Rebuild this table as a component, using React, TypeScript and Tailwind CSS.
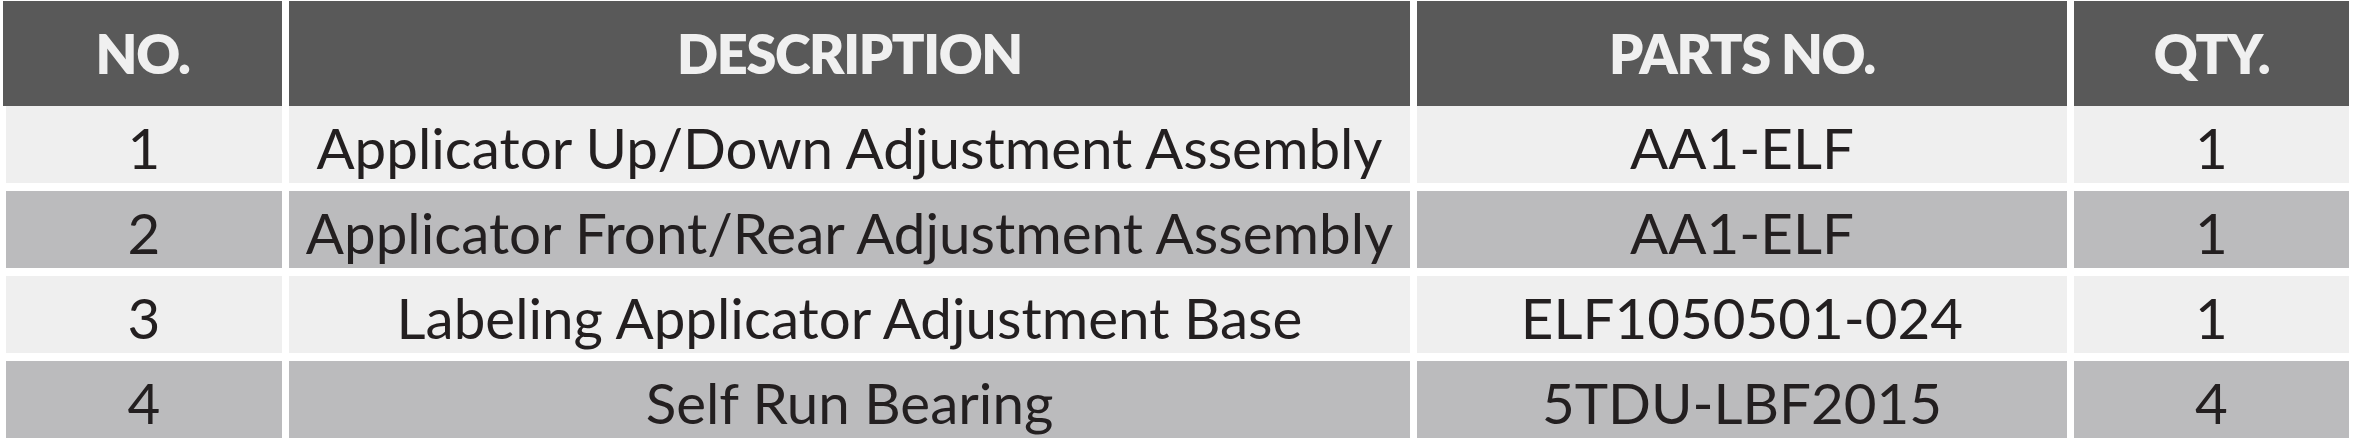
import React from "react";

const rows = [
  { no: "1", desc: "Applicator Up/Down Adjustment Assembly", part: "AA1-ELF", qty: "1" },
  { no: "2", desc: "Applicator Front/Rear Adjustment Assembly", part: "AA1-ELF", qty: "1" },
  { no: "3", desc: "Labeling Applicator Adjustment Base", part: "ELF1050501-024", qty: "1" },
  { no: "4", desc: "Self Run Bearing", part: "5TDU-LBF2015", qty: "4" },
];

export default function App() {
  return (
    <div className="w-[2357px] h-[444px] bg-white pl-[3px] pt-[1px] font-['Lato',sans-serif]">
      {/* header */}
      <div className="grid grid-cols-[279px_1121px_650px_275px] gap-x-[7px] h-[105px] text-[#f0f0f0] text-[54px] font-extrabold tracking-tight">
        <div className="bg-[#595959] flex items-center justify-center">NO.</div>
        <div className="bg-[#595959] flex items-center justify-center">DESCRIPTION</div>
        <div className="bg-[#595959] flex items-center justify-center">PARTS NO.</div>
        <div className="bg-[#595959] flex items-center justify-center">QTY.</div>
      </div>

      {/* body */}
      <div className="flex flex-col gap-y-[8px] pl-[3px] w-[2351px]">
        {rows.map((r, i) => (
          <div
            key={r.no}
            className={`grid grid-cols-[276px_1121px_650px_275px] gap-x-[7px] h-[77px] text-[56.5px] text-[#231f20] leading-none ${
              i % 2 === 0 ? "[&>div]:bg-[#efefef]" : "[&>div]:bg-[#bbbbbd]"
            }`}
          >
            <div className="flex items-center justify-center pt-[5px]">{r.no}</div>
            <div className="flex items-center justify-center pt-[5px]">{r.desc}</div>
            <div className="flex items-center justify-center pt-[5px]">{r.part}</div>
            <div className="flex items-center justify-center pt-[5px]">{r.qty}</div>
          </div>
        ))}
      </div>
    </div>
  );
}
